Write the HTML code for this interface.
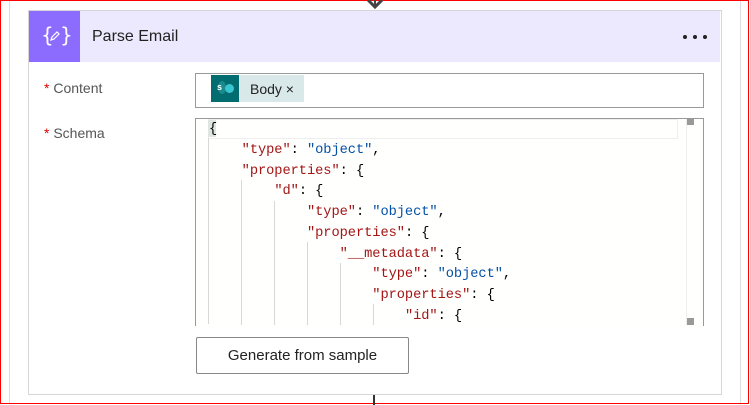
<!DOCTYPE html>
<html><head><style>
body{margin:0;width:750px;height:405px;background:#fff;position:relative;overflow:hidden;font-family:"Liberation Sans",sans-serif}
.a{position:absolute}
.code{font-family:"Liberation Mono",monospace;font-size:13.7px;white-space:pre;color:#000;letter-spacing:-0.05px}
.k{color:#a31515}.s{color:#0451a5}
.g{position:absolute;width:1px;background:#d8d8d8;top:139px;height:186px}
</style></head><body>
<div class="a" style="left:0;top:0;width:747px;height:402px;border:1px solid #f00"></div>
<div class="a" style="left:9px;top:1px;width:1px;height:402px;background:#ddd"></div>
<div class="a" style="left:740px;top:1px;width:1px;height:402px;background:#ddd"></div>
<svg class="a" style="left:364px;top:0" width="22" height="10"><path d="M4 0 L11 7 L18 0" stroke="#444" stroke-width="3" fill="none"/><path d="M11 0V8" stroke="#444" stroke-width="2"/></svg>
<div class="a" style="left:373px;top:394px;width:2px;height:11px;background:#333"></div>
<div class="a" style="left:28px;top:10px;width:692px;height:383px;border:1px solid #d6d6d6;background:#fff"></div>
<div class="a" style="left:29px;top:11px;width:691px;height:51px;background:#ece8fd"></div>
<div class="a" style="left:29px;top:11px;width:51px;height:51px;background:#8c6cff"></div>
<div class="a" style="left:41px;top:23px;color:#fff;font-size:20px;font-family:'DejaVu Sans',sans-serif">{</div>
<div class="a" style="left:60px;top:23px;color:#fff;font-size:20px;font-family:'DejaVu Sans',sans-serif">}</div>
<svg class="a" style="left:49px;top:30px" width="12" height="12"><path d="M2 10 L3 7 L8 2 L10 4 L5 9 Z" stroke="#fff" stroke-width="1.2" fill="none"/></svg>
<div class="a" style="left:92px;top:28px;font-size:16px;color:#222">Parse Email</div>
<div class="a" style="left:683px;top:35px;width:4px;height:4px;border-radius:2px;background:#222"></div>
<div class="a" style="left:693px;top:35px;width:4px;height:4px;border-radius:2px;background:#222"></div>
<div class="a" style="left:703px;top:35px;width:4px;height:4px;border-radius:2px;background:#222"></div>
<div class="a" style="left:44px;top:80px;font-size:14px;color:#555"><span style="color:#d00">*</span> Content</div>
<div class="a" style="left:44px;top:125px;font-size:14px;color:#555"><span style="color:#d00">*</span> Schema</div>
<div class="a" style="left:195px;top:73px;width:507px;height:33px;border:1px solid #999"></div>
<div class="a" style="left:211px;top:75px;width:93px;height:27px;background:#d9e9e9"></div>
<div class="a" style="left:211px;top:75px;width:28px;height:27px;background:#036c70"></div>
<div class="a" style="left:218px;top:81px;width:8px;height:13px;background:#1a8a8c;border-radius:50%"></div>
<div class="a" style="left:225px;top:84px;width:9px;height:9px;background:#37c6d0;border-radius:50%"></div>
<div class="a" style="left:217px;top:82px;color:#fff;font-size:9px;font-weight:bold">s</div>
<div class="a" style="left:250px;top:81px;font-size:14px;color:#222">Body ×</div>
<div class="a" style="left:195px;top:118px;width:507px;height:207px;border:1px solid #999;border-bottom:none;background:#fffffe;overflow:hidden"></div>
<div class="a" style="left:208px;top:119px;width:468px;height:18px;border:1px solid #eee"></div>
<div class="a" style="left:208px;top:120px;width:8px;height:17px;background:#dfe6df"></div>
<div class="a" style="left:686px;top:119px;width:1px;height:206px;background:#eee"></div>
<div class="a" style="left:687px;top:119px;width:7px;height:6px;background:#999"></div>
<div class="a" style="left:687px;top:318px;width:7px;height:7px;background:#999"></div>
<div class="g" style="left:208px;top:138px"></div>
<div class="g" style="left:241px;top:180px;height:145px"></div>
<div class="g" style="left:274px;top:201px;height:124px"></div>
<div class="g" style="left:307px;top:242px;height:83px"></div>
<div class="g" style="left:340px;top:263px;height:62px"></div>
<div class="g" style="left:373px;top:304px;height:21px"></div>
<div class="a code" style="left:209px;top:120px;line-height:20.75px;height:205px;overflow:hidden">{
    <span class="k">"type"</span>: <span class="s">"object"</span>,
    <span class="k">"properties"</span>: {
        <span class="k">"d"</span>: {
            <span class="k">"type"</span>: <span class="s">"object"</span>,
            <span class="k">"properties"</span>: {
                <span class="k">"__metadata"</span>: {
                    <span class="k">"type"</span>: <span class="s">"object"</span>,
                    <span class="k">"properties"</span>: {
                        <span class="k">"id"</span>: {</div>
<div class="a" style="left:196px;top:337px;width:211px;height:35px;border:1px solid #888;border-radius:2px;background:#fff;text-align:center;line-height:35px;font-size:15px;color:#222">Generate from sample</div>
</body></html>
